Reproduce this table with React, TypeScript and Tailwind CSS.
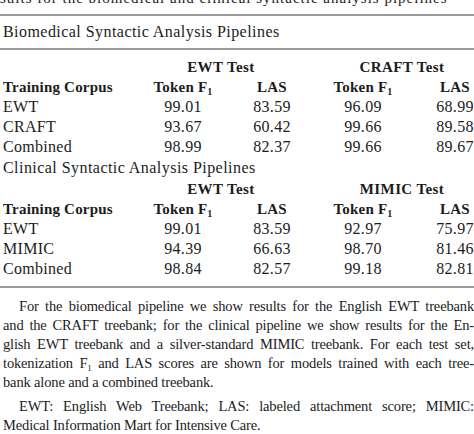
const rowsBio = [
  ['EWT', '99.01', '83.59', '96.09', '68.99'],
  ['CRAFT', '93.67', '60.42', '99.66', '89.58'],
  ['Combined', '98.99', '82.37', '99.66', '89.67'],
];

const rowsClin = [
  ['EWT', '99.01', '83.59', '92.97', '75.97'],
  ['MIMIC', '94.39', '66.63', '98.70', '81.46'],
  ['Combined', '98.84', '82.57', '99.18', '82.81'],
];

const cols = 'grid grid-cols-[137px_86px_92px_90px_94px]';

function TokenF1() {
  return (
    <span>
      Token F<sub className="text-[10px] align-baseline relative top-[3px]">1</sub>
    </span>
  );
}

function Section({ title, test, rows, titleClass }: { title: string; test: string; rows: string[][]; titleClass: string }) {
  return (
    <div>
      <div className={`text-[16px] tracking-[0.45px] ${titleClass}`}>{title}</div>
      <div className={`${cols} font-bold tracking-[0.4px]`}>
        <div />
        <div className="col-span-2 text-center pr-[16px]">EWT Test</div>
        <div className="col-span-2 text-center pr-[16px]">{test}</div>
      </div>
      <div className={`${cols} font-bold tracking-[0.2px]`}>
        <div>Training Corpus</div>
        <div className="text-center"><TokenF1 /></div>
        <div className="text-center">LAS</div>
        <div className="text-center"><TokenF1 /></div>
        <div className="text-center">LAS</div>
      </div>
      {rows.map((r) => (
        <div key={r[0]} className={`${cols} text-[16px] tracking-[0.3px]`}>
          <div>{r[0]}</div>
          {r.slice(1).map((v, i) => (
            <div key={i} className="text-center">{v}</div>
          ))}
        </div>
      ))}
    </div>
  );
}

const para = [
  'For the biomedical pipeline we show results for the English EWT treebank',
  'and the CRAFT treebank; for the clinical pipeline we show results for the En-',
  'glish EWT treebank and a silver-standard MIMIC treebank. For each test set,',
];

export default function App() {
  return (
    <div className="w-[474px] h-[434px] overflow-hidden bg-white text-[#1c1c1c] text-[15px] leading-[20px] font-['Liberation_Serif',serif]">
      {/* caption cut at top */}
      <div className="h-[7px] overflow-hidden">
        <div className="-mt-[12px] whitespace-nowrap tracking-[1px]">sults for the biomedical and clinical syntactic analysis pipelines</div>
      </div>
      <div className="mt-[7px] h-[2px] bg-[#9a9a9a]" />

      <div className="pl-[3px] w-[502px]">
        <Section title="Biomedical Syntactic Analysis Pipelines" test="CRAFT Test" rows={rowsBio} titleClass="mt-[6px] pb-[6px] mb-[7px] border-b-2 border-[#9a9a9a] -ml-[3px] pl-[3px] w-[477px]" />
        <Section title="Clinical Syntactic Analysis Pipelines" test="MIMIC Test" rows={rowsClin} titleClass="mt-[1px] mb-[1px]" />
      </div>
      <div className="mt-[7px] h-[2px] bg-[#9a9a9a]" />

      <div className="mt-[9px] pl-[3px] w-[474px] text-[14.5px] tracking-[-0.15px] leading-[19px]">
        {para.map((l, i) => (
          <div key={i} className={`whitespace-nowrap text-justify [text-align-last:justify] ${i === 0 ? 'pl-[16px]' : ''}`}>{l}</div>
        ))}
        <div className="whitespace-nowrap text-justify [text-align-last:justify]">
          tokenization F<sub className="text-[9px] align-baseline relative top-[3px]">1</sub> and LAS scores are shown for models trained with each tree-
        </div>
        <div>bank alone and a combined treebank.</div>
        <div className="mt-[5px] pl-[16px] whitespace-nowrap text-justify [text-align-last:justify]">
          EWT: English Web Treebank; LAS: labeled attachment score; MIMIC:
        </div>
        <div>Medical Information Mart for Intensive Care.</div>
      </div>
    </div>
  );
}
